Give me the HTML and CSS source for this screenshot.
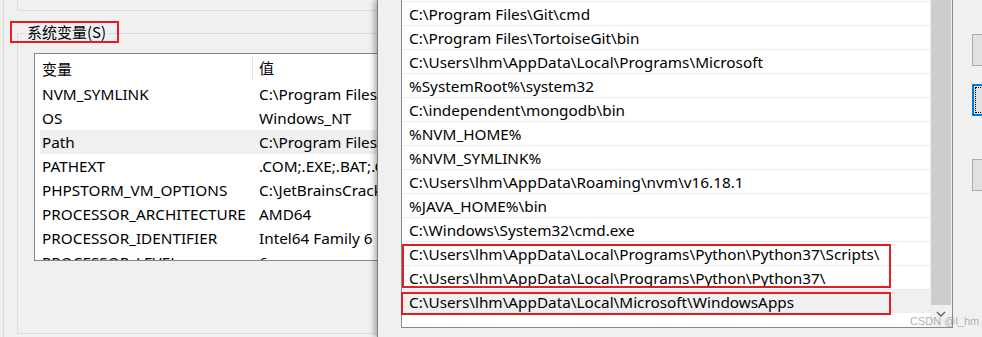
FILE: index.html
```html
<!DOCTYPE html>
<html lang="zh-cn">
<head>
    <meta charset="UTF-8">
    <title>环境变量</title>
    <link rel="stylesheet" href="styles.css">
</head>
<body>
<div class="screen">
    <!-- 左边：环境变量窗口 -->
    <div class="env">
        <div class="user-group"></div>
        <div class="sys-group">
            <div class="legend"><span>系统变量(S)</span></div>
            <div class="var-list">
                <div class="var-row head"><span class="name">变量</span><span class="value">值</span></div>
                <div class="var-row"><span class="name">NVM_SYMLINK</span><span class="value">C:\Program Files\nodejs</span></div>
                <div class="var-row"><span class="name">OS</span><span class="value">Windows_NT</span></div>
                <div class="var-row sel"><span class="name">Path</span><span class="value">C:\Program Files\Common Files</span></div>
                <div class="var-row"><span class="name">PATHEXT</span><span class="value">.COM;.EXE;.BAT;.CMD;.VBS</span></div>
                <div class="var-row"><span class="name">PHPSTORM_VM_OPTIONS</span><span class="value">C:\JetBrainsCrack\phpstorm.vmoptions</span></div>
                <div class="var-row"><span class="name">PROCESSOR_ARCHITECTURE</span><span class="value">AMD64</span></div>
                <div class="var-row"><span class="name">PROCESSOR_IDENTIFIER</span><span class="value">Intel64 Family 6 Model 158</span></div>
                <div class="var-row"><span class="name">PROCESSOR_LEVEL</span><span class="value">6</span></div>
            </div>
        </div>
    </div>

    <!-- 右边：编辑环境变量 -->
    <div class="dialog">
        <div class="path-list">
            <div class="paths">
                <div class="path">C:\Program Files\Git\cmd</div>
                <div class="path">C:\Program Files\TortoiseGit\bin</div>
                <div class="path">C:\Users\lhm\AppData\Local\Programs\Microsoft</div>
                <div class="path">%SystemRoot%\system32</div>
                <div class="path">C:\independent\mongodb\bin</div>
                <div class="path">%NVM_HOME%</div>
                <div class="path">%NVM_SYMLINK%</div>
                <div class="path">C:\Users\lhm\AppData\Roaming\nvm\v16.18.1</div>
                <div class="path">%JAVA_HOME%\bin</div>
                <div class="path">C:\Windows\System32\cmd.exe</div>
                <div class="path">C:\Users\lhm\AppData\Local\Programs\Python\Python37\Scripts\</div>
                <div class="path">C:\Users\lhm\AppData\Local\Programs\Python\Python37\</div>
                <div class="path sel">C:\Users\lhm\AppData\Local\Microsoft\WindowsApps</div>
            </div>
            <div class="scrollbar">
                <div class="thumb"></div>
                <svg class="arrow" width="10" height="6" viewBox="0 0 10 6"><polyline points="1,1 5,5 9,1" fill="none" stroke="#606060" stroke-width="1.4"/></svg>
            </div>
            <!-- 红框标注 -->
            <div class="mark mark-a"></div>
            <div class="mark mark-b"></div>
        </div>
        <div class="buttons">
            <div class="btn"></div>
            <div class="btn focus"></div>
            <div class="btn far"></div>
        </div>
    </div>

    <div class="watermark">CSDN @l_hm</div>
</div>
</body>
</html>
```

FILE: styles.css
```css
html, body{
    margin: 0;
    width: 100%;
    height: 100%;
    overflow: hidden;
    background-color: #f0f0f0;
}
.screen{
    display: flex;
    width: 982px;
    height: 337px;
    position: relative;
    font-family: "Noto Sans", "Noto Sans CJK SC", sans-serif;
    font-size: 15.3px;
    color: #000;
}

/* 左边窗口 */
.env{
    flex: 0 0 374px;
    margin-left: 3px;
    border-left: 1px solid #dadada;
    box-sizing: border-box;
    overflow: hidden;
}
.user-group{
    margin-left: 13px;
    width: 400px;
    height: 11px;
    box-sizing: border-box;
    border-left: 1px solid #dcdcdc;
    border-bottom: 1px solid #dcdcdc;
}
.sys-group{
    margin: 22px 0 0 13px;
    width: 400px;
    height: 301px;
    box-sizing: border-box;
    border: 1px solid #dcdcdc;
    border-right: none;
    display: flex;
    flex-direction: column;
    align-items: flex-start;
}
.legend{
    margin: -13px 0 0 -8px;
    height: 22px;
    box-sizing: border-box;
    border: 2px solid #e51e25;
    padding: 0 9px 0 13px;
    line-height: 18px;
    font-size: 15px;
    font-family: "Noto Sans CJK SC", sans-serif;
}
.legend span{
    display: block;
    padding: 0 2px;
    background: #f0f0f0;
}
.var-list{
    margin: 10px 0 0 16px;
    width: 420px;
    height: 208px;
    box-sizing: border-box;
    border: 1px solid #828790;
    background: #fff;
    padding-left: 5px;
    overflow: hidden;
}
.var-row{
    display: flex;
    height: 24px;
    line-height: 24px;
    padding-left: 2px;
    white-space: nowrap;
}
.var-row .name{
    flex: 0 0 210px;
    border-right: 1px solid transparent;
}
.var-row .value{
    padding-left: 6px;
}
.var-row.head{
    height: 28px;
    line-height: 26px;
    font-size: 15px;
    font-family: "Noto Sans CJK SC", sans-serif;
}
.var-row.head .name{
    border-right-color: #e5e5e5;
    margin: 2px 0 1px;
    line-height: 25px;
}
.var-row.head .value{
    line-height: 28px;
}
.var-row.sel{
    background: #f0f0f0;
}

/* 右边对话框 */
.dialog{
    flex: 1;
    display: flex;
    align-items: flex-start;
    padding-left: 23px;
    border-left: 1px solid #7d7d7d;
    box-shadow: -3px 0 5px rgba(0, 0, 0, 0.28);
    background: #f0f0f0;
    position: relative;
    z-index: 1;
}
.path-list{
    flex: 0 0 552px;
    height: 328px;
    box-sizing: border-box;
    border: 1px solid #828790;
    border-top: none;
    background: #fff;
    display: flex;
    position: relative;
}
.paths{
    width: 528px;
    padding: 1px 0 0 1px;
    box-sizing: border-box;
}
.path{
    height: 24px;
    box-sizing: border-box;
    border-top: 1px solid #ececec;
    padding-left: 6px;
    line-height: 24px;
    white-space: nowrap;
}
.path.sel{
    background: #f0f0f0;
}
.scrollbar{
    width: 22px;
    background: #f0f0f0;
    display: flex;
    flex-direction: column;
    align-items: center;
}
.thumb{
    width: 20px;
    height: 305px;
    background: #cdcdcd;
}
.arrow{
    margin-top: 6px;
}
.mark{
    position: absolute;
    box-sizing: border-box;
    border: 2px solid #e51e25;
}
.mark-a{
    left: 0;
    top: 244px;
    width: 489px;
    height: 44px;
}
.mark-b{
    left: -1px;
    top: 292px;
    width: 490px;
    height: 23px;
}
.buttons{
    margin-left: 19px;
    display: flex;
    flex-direction: column;
}
.btn{
    width: 80px;
    height: 32px;
    box-sizing: border-box;
    border: 1px solid #adadad;
    background: #e1e1e1;
    margin-top: 18px;
    position: relative;
}
.btn:first-child{
    margin-top: 34px;
}
.btn.focus{
    border: 2px solid #0078d7;
}
.btn.focus::after{
    content: "";
    position: absolute;
    inset: 1px;
    border: 1px dotted #000;
}
.btn.far{
    margin-top: 43px;
}

/* 水印 */
.watermark{
    position: absolute;
    left: 910px;
    top: 315px;
    font-family: "Liberation Sans", sans-serif;
    font-size: 11px;
    color: rgba(150, 150, 150, 0.75);
    z-index: 2;
}
```
